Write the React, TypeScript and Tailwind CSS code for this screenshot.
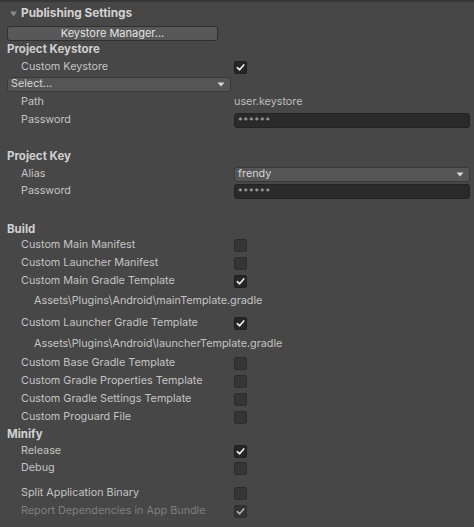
import type { ReactNode } from 'react';

const font = { fontFamily: 'Inter, "Noto Sans", sans-serif' };

function Check({ on, disabled }: { on?: boolean; disabled?: boolean }) {
    return (
        <div
            className={`w-[13px] h-[13px] rounded-[2px] border flex items-center justify-center ${
                on ? 'bg-[#262626] border-[#1f1f1f]' : 'bg-[#353535] border-[#2c2c2c]'
            } ${disabled ? 'opacity-60' : ''}`}
        >
            {on && (
                <svg width="9" height="9" viewBox="0 0 10 10">
                    <path d="M1.5 5.2 L4 7.6 L8.6 2.2" stroke="#f0f0f0" strokeWidth="1.8" fill="none" strokeLinecap="round" strokeLinejoin="round" />
                </svg>
            )}
        </div>
    );
}

function Arrow() {
    return (
        <svg width="8" height="5" viewBox="0 0 8 5">
            <path d="M0.5 0.5 H7.5 L4 4.5 Z" fill="#d8d8d8" />
        </svg>
    );
}

function Row({ label, h = 18, children, dim }: { label: string; h?: number; children?: ReactNode; dim?: boolean }) {
    return (
        <div className="flex items-center" style={{ height: h }}>
            <div className={`w-[227px] pl-[14px] whitespace-nowrap ${dim ? 'text-[#7f7f7f]' : 'text-[#c4c4c4]'}`}>{label}</div>
            <div className="flex-1 flex items-center">{children}</div>
        </div>
    );
}

function Heading({ text, h = 17 }: { text: string; h?: number }) {
    return (
        <div className="flex items-center font-bold text-[#d0d0d0] text-[11.5px]" style={{ height: h }}>
            {text}
        </div>
    );
}

function Field({ children }: { children: ReactNode }) {
    return (
        <div className="flex-1 h-[15px] bg-[#2a2a2a] border border-[#232323] rounded-[3px] flex items-center px-[3px] text-[#b8b8b8] text-[9px] tracking-[1px]">
            {children}
        </div>
    );
}

function Popup({ value, className }: { value: string; className?: string }) {
    return (
        <div className={`h-[15px] bg-[#555555] border border-[#3a3a3a] rounded-[3px] flex items-center justify-between pl-[3px] pr-[5px] text-[#d6d6d6] ${className ?? ''}`}>
            <span>{value}</span>
            <Arrow />
        </div>
    );
}

function AssetPath({ text, h }: { text: string; h: number }) {
    return (
        <div className="flex items-center pl-[27px] text-[#c4c4c4] whitespace-nowrap" style={{ height: h }}>
            {text}
        </div>
    );
}

export default function App() {
    return (
        <div className="w-[474px] h-[527px] bg-[#474747] overflow-hidden text-[10.8px] leading-none" style={font}>
            <div className="h-[2px] bg-[#373737]" />
            <div className="px-[7px] pr-[4px] pt-[3px]">
                {/* Foldout header */}
                <div className="flex items-center h-[18px] font-bold text-[#d2d2d2] text-[11.8px]">
                    <svg width="7" height="6" viewBox="0 0 7 6" className="ml-[3px] mr-[4px]">
                        <path d="M0 0.5 H7 L3.5 5.5 Z" fill="#8a8a8a" />
                    </svg>
                    Publishing Settings
                </div>
                <div className="mt-[3px] w-[211px] h-[15px] bg-[#585858] border border-[#303030] rounded-[3px] flex items-center justify-center text-[#e2e2e2] text-[11px]">
                    Keystore Manager...
                </div>

                <Heading text="Project Keystore" h={18} />
                <Row label="Custom Keystore" h={17}>
                    <Check on />
                </Row>
                <div className="h-[17px] flex items-center">
                    <Popup value="Select..." className="w-[224px]" />
                </div>
                <Row label="Path">
                    <span className="text-[#bdbdbd]">user.keystore</span>
                </Row>
                <Row label="Password">
                    <Field>******</Field>
                </Row>

                <div className="h-[20px]" />
                <Heading text="Project Key" h={16} />
                <Row label="Alias">
                    <Popup value="frendy" className="flex-1" />
                </Row>
                <Row label="Password" h={17}>
                    <Field>******</Field>
                </Row>

                <div className="h-[23px]" />
                <Heading text="Build" h={13} />
                <Row label="Custom Main Manifest">
                    <Check />
                </Row>
                <Row label="Custom Launcher Manifest">
                    <Check />
                </Row>
                <Row label="Custom Main Gradle Template">
                    <Check on />
                </Row>
                <AssetPath text="Assets\Plugins\Android\mainTemplate.gradle" h={22} />
                <Row label="Custom Launcher Gradle Template" h={22}>
                    <Check on />
                </Row>
                <AssetPath text="Assets\Plugins\Android\launcherTemplate.gradle" h={20} />
                <Row label="Custom Base Gradle Template">
                    <Check />
                </Row>
                <Row label="Custom Gradle Properties Template">
                    <Check />
                </Row>
                <Row label="Custom Gradle Settings Template">
                    <Check />
                </Row>
                <Row label="Custom Proguard File">
                    <Check />
                </Row>

                <Heading text="Minify" />
                <Row label="Release" h={17}>
                    <Check on />
                </Row>
                <Row label="Debug" h={17}>
                    <Check />
                </Row>
                <div className="h-[7px]" />
                <Row label="Split Application Binary">
                    <Check />
                </Row>
                <Row label="Report Dependencies in App Bundle" dim>
                    <Check on disabled />
                </Row>
            </div>
        </div>
    );
}
